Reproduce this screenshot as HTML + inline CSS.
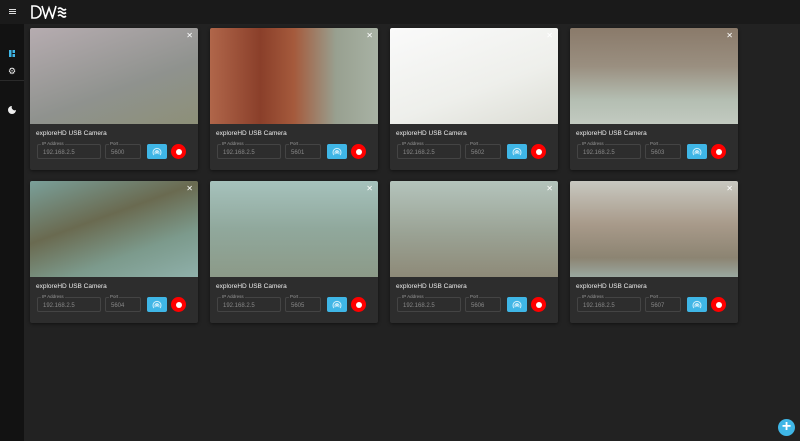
<!DOCTYPE html><html><head><style>
*{margin:0;padding:0;box-sizing:border-box}
body{width:800px;height:441px;background:#222;font-family:"Liberation Sans",sans-serif;overflow:hidden;position:relative}
.top{position:absolute;left:0;top:0;width:800px;height:24px;background:#1a1a1a}
.side{position:absolute;left:0;top:24px;width:24px;height:417px;background:#121212}
.card{position:absolute;width:168px;height:142px;background:#2d2d2d;border-radius:2px;box-shadow:0 1px 3px rgba(0,0,0,.5)}
.img{position:absolute;left:0;top:0;width:168px;height:96px;border-radius:2px 2px 0 0}
.x{position:absolute;right:5px;top:3px;color:#fff;font-size:8px}
.t{position:absolute;left:6px;top:102px;color:#eee;font-size:6.5px}
.f{position:absolute;top:116px;height:15px;border:1px solid #444;border-radius:2px;color:#888;font-size:6px;padding:5px 0 0 5px}
.f span{position:absolute;top:-4px;left:3px;font-size:4.5px;background:#2d2d2d;padding:0 1px;color:#999}
.b{position:absolute;left:117px;top:116px;width:20px;height:15px;background:#3fb6e6;border-radius:2px}
.b svg{position:absolute;left:5px;top:2.5px}
.r{position:absolute;left:141px;top:116px;width:15px;height:15px;border-radius:50%;background:#f00}
.r:after{content:"";position:absolute;left:4.5px;top:4.5px;width:6px;height:6px;border-radius:50%;background:#fff}
</style></head><body>
<div class="top"></div>
<div class="side"><div style="position:absolute;top:56px;left:0;width:24px;height:1px;background:#2a2a2a"></div></div>
<div style="position:absolute;left:9px;top:9px;width:7px;height:1px;background:#ddd;box-shadow:0 2px #ddd,0 4px #ddd"></div>
<svg style="position:absolute;left:31px;top:5px" width="38" height="14" viewBox="0 0 38 14" fill="none" stroke="#fff" stroke-width="1.6"><path d="M1 1v12h3a6 6 0 0 0 0-12z"/><path d="M11 1l3.5 12 3.5-10 3.5 10 3.5-12"/><path d="M27 4q2-2 4 0t4 0M27 7.5q2-2 4 0t4 0M27 11q2-2 4 0t4 0"/></svg>
<svg style="position:absolute;left:9px;top:50px" width="6" height="7" viewBox="0 0 6 7" fill="#3fb6e6"><rect x="0" y="0" width="2.5" height="7"/><rect x="3.5" y="0" width="2.5" height="3"/><rect x="3.5" y="4" width="2.5" height="3"/></svg>
<div style="position:absolute;left:8px;top:66px;color:#eee;font-size:9px">⚙</div>
<svg style="position:absolute;left:8px;top:106px" width="8" height="8" viewBox="0 0 8 8"><path d="M4 0a4 4 0 1 0 4 4 3 3 0 0 1-4-4z" fill="#eee"/></svg>
<div style="position:absolute;left:778px;top:419px;width:17px;height:17px;border-radius:50%;background:#3fb6e6;color:#fff;font-size:16px;line-height:16px;text-align:center;font-weight:bold">+</div>

<div class="card" style="left:30px;top:28px"><div class="img" style="background:linear-gradient(160deg,#b6acb0,#8f928e 60%,#8d9078)"></div><div class="x">✕</div><div class="t">exploreHD USB Camera</div><div class="f" style="left:7px;width:64px"><span>IP Address</span>192.168.2.5</div><div class="f" style="left:75px;width:36px"><span>Port</span>5600</div><div class="b"><svg width="10" height="10" viewBox="0 0 10 10" fill="none" stroke="#cfeefa" stroke-width="1"><path d="M2 8a4 4 0 1 1 6 0M3.5 7a2 2 0 1 1 3 0"/><circle cx="5" cy="5.5" r=".7" fill="#cfeefa"/></svg></div><div class="r"></div></div>
<div class="card" style="left:210px;top:28px"><div class="img" style="background:linear-gradient(90deg,#b0664a,#8a3f2a 30%,#a55a3c 50%,#98a090 75%,#a8b2a4)"></div><div class="x">✕</div><div class="t">exploreHD USB Camera</div><div class="f" style="left:7px;width:64px"><span>IP Address</span>192.168.2.5</div><div class="f" style="left:75px;width:36px"><span>Port</span>5601</div><div class="b"><svg width="10" height="10" viewBox="0 0 10 10" fill="none" stroke="#cfeefa" stroke-width="1"><path d="M2 8a4 4 0 1 1 6 0M3.5 7a2 2 0 1 1 3 0"/><circle cx="5" cy="5.5" r=".7" fill="#cfeefa"/></svg></div><div class="r"></div></div>
<div class="card" style="left:390px;top:28px"><div class="img" style="background:linear-gradient(160deg,#fafafa,#eeefeb 60%,#dcddd5)"></div><div class="x">✕</div><div class="t">exploreHD USB Camera</div><div class="f" style="left:7px;width:64px"><span>IP Address</span>192.168.2.5</div><div class="f" style="left:75px;width:36px"><span>Port</span>5602</div><div class="b"><svg width="10" height="10" viewBox="0 0 10 10" fill="none" stroke="#cfeefa" stroke-width="1"><path d="M2 8a4 4 0 1 1 6 0M3.5 7a2 2 0 1 1 3 0"/><circle cx="5" cy="5.5" r=".7" fill="#cfeefa"/></svg></div><div class="r"></div></div>
<div class="card" style="left:570px;top:28px"><div class="img" style="background:linear-gradient(180deg,#8a7a6a,#9a8f80 40%,#b4beb2 75%,#c2cac0)"></div><div class="x">✕</div><div class="t">exploreHD USB Camera</div><div class="f" style="left:7px;width:64px"><span>IP Address</span>192.168.2.5</div><div class="f" style="left:75px;width:36px"><span>Port</span>5603</div><div class="b"><svg width="10" height="10" viewBox="0 0 10 10" fill="none" stroke="#cfeefa" stroke-width="1"><path d="M2 8a4 4 0 1 1 6 0M3.5 7a2 2 0 1 1 3 0"/><circle cx="5" cy="5.5" r=".7" fill="#cfeefa"/></svg></div><div class="r"></div></div>

<div class="card" style="left:30px;top:181px"><div class="img" style="background:linear-gradient(160deg,#7aa09a,#6a6a50 40%,#7c9a8c 70%,#8fb0aa)"></div><div class="x">✕</div><div class="t">exploreHD USB Camera</div><div class="f" style="left:7px;width:64px"><span>IP Address</span>192.168.2.5</div><div class="f" style="left:75px;width:36px"><span>Port</span>5604</div><div class="b"><svg width="10" height="10" viewBox="0 0 10 10" fill="none" stroke="#cfeefa" stroke-width="1"><path d="M2 8a4 4 0 1 1 6 0M3.5 7a2 2 0 1 1 3 0"/><circle cx="5" cy="5.5" r=".7" fill="#cfeefa"/></svg></div><div class="r"></div></div>
<div class="card" style="left:210px;top:181px"><div class="img" style="background:linear-gradient(180deg,#a6c2bc,#90a89c 50%,#8c9a88)"></div><div class="x">✕</div><div class="t">exploreHD USB Camera</div><div class="f" style="left:7px;width:64px"><span>IP Address</span>192.168.2.5</div><div class="f" style="left:75px;width:36px"><span>Port</span>5605</div><div class="b"><svg width="10" height="10" viewBox="0 0 10 10" fill="none" stroke="#cfeefa" stroke-width="1"><path d="M2 8a4 4 0 1 1 6 0M3.5 7a2 2 0 1 1 3 0"/><circle cx="5" cy="5.5" r=".7" fill="#cfeefa"/></svg></div><div class="r"></div></div>
<div class="card" style="left:390px;top:181px"><div class="img" style="background:linear-gradient(180deg,#b4c4bc,#9aa294 55%,#8e8a78)"></div><div class="x">✕</div><div class="t">exploreHD USB Camera</div><div class="f" style="left:7px;width:64px"><span>IP Address</span>192.168.2.5</div><div class="f" style="left:75px;width:36px"><span>Port</span>5606</div><div class="b"><svg width="10" height="10" viewBox="0 0 10 10" fill="none" stroke="#cfeefa" stroke-width="1"><path d="M2 8a4 4 0 1 1 6 0M3.5 7a2 2 0 1 1 3 0"/><circle cx="5" cy="5.5" r=".7" fill="#cfeefa"/></svg></div><div class="r"></div></div>
<div class="card" style="left:570px;top:181px"><div class="img" style="background:linear-gradient(180deg,#c8c8c0,#a89a8a 45%,#8c8472 80%,#9aa8a0)"></div><div class="x">✕</div><div class="t">exploreHD USB Camera</div><div class="f" style="left:7px;width:64px"><span>IP Address</span>192.168.2.5</div><div class="f" style="left:75px;width:36px"><span>Port</span>5607</div><div class="b"><svg width="10" height="10" viewBox="0 0 10 10" fill="none" stroke="#cfeefa" stroke-width="1"><path d="M2 8a4 4 0 1 1 6 0M3.5 7a2 2 0 1 1 3 0"/><circle cx="5" cy="5.5" r=".7" fill="#cfeefa"/></svg></div><div class="r"></div></div>
</body></html>
